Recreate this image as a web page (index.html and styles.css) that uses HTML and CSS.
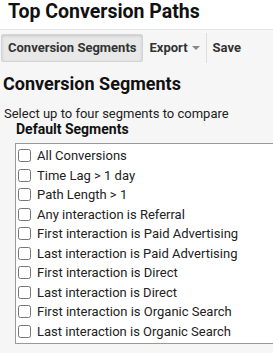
FILE: index.html
```html
<!DOCTYPE html>
<html lang="en">
<head>
    <meta charset="UTF-8">
    <meta name="viewport" content="width=device-width, initial-scale=1.0">
    <title>Top Conversion Paths</title>
    <link rel="stylesheet" href="styles.css">
</head>
<body>
    <header class="page-header">
        <h1>Top Conversion Paths</h1>
    </header>
    <nav class="toolbar">
        <button class="tool-btn active">Conversion Segments</button>
        <button class="tool-btn">Export <span class="caret"></span></button>
        <span class="sep"></span>
        <button class="tool-btn">Save</button>
    </nav>
    <section class="segments">
        <h2>Conversion Segments</h2>
        <p class="hint">Select up to four segments to compare</p>
        <h3>Default Segments</h3>
        <ul class="segment-list">
            <li><label><input type="checkbox"> All Conversions</label></li>
            <li><label><input type="checkbox"> Time Lag &gt; 1 day</label></li>
            <li><label><input type="checkbox"> Path Length &gt; 1</label></li>
            <li><label><input type="checkbox"> Any interaction is Referral</label></li>
            <li><label><input type="checkbox"> First interaction is Paid Advertising</label></li>
            <li><label><input type="checkbox"> Last interaction is Paid Advertising</label></li>
            <li><label><input type="checkbox"> First interaction is Direct</label></li>
            <li><label><input type="checkbox"> Last interaction is Direct</label></li>
            <li><label><input type="checkbox"> First interaction is Organic Search</label></li>
            <li><label><input type="checkbox"> Last interaction is Organic Search</label></li>
        </ul>
    </section>
</body>
</html>
```

FILE: styles.css
```css
html {
  box-sizing: border-box;
  font-family: Roboto, "Liberation Sans", sans-serif;
}
*,
*:before,
*:after {
  box-sizing: inherit;
}
body {
  margin: 0;
  background-color: #f6f6f6;
  color: #222;
  overflow: hidden;
}
.page-header {
  background-color: #fff;
  height: 30px;
  border-bottom: 1px solid #e2e2e2;
  padding: 1px 0 0 8px;
}
h1 {
  margin: 0;
  font-size: 19.5px;
  line-height: 22px;
  color: #111;
}
.toolbar {
  display: flex;
  align-items: center;
  height: 33px;
  padding: 3px 0 1px 1px;
}
.tool-btn {
  font-family: inherit;
  font-size: 13px;
  font-weight: bold;
  color: #333;
  background: none;
  border: none;
  height: 28px;
  padding: 0 6px;
  display: flex;
  align-items: center;
  white-space: nowrap;
}
.tool-btn.active {
  background-color: #e8e8e8;
  border: 1px solid #d4d4d4;
  border-radius: 2px;
  box-shadow: inset 0 1px 3px rgba(0,0,0,.15);
  padding: 0 6px;
}
.caret {
  display: inline-block;
  margin-left: 4px;
  border-left: 4px solid transparent;
  border-right: 4px solid transparent;
  border-top: 4px solid #888;
}
.sep {
  width: 1px;
  height: 30px;
  background-color: #ddd;
}
.segments {
  padding: 0 0 0 3px;
}
h2 {
  margin: 10px 0 0;
  font-size: 18px;
  line-height: 22px;
  color: #111;
}
.hint {
  font-size: 13px;
  line-height: 15px;
  margin: 11px 0 0 1px;
  color: #222;
}
h3 {
  margin: 0 0 0 13px;
  font-size: 14px;
  line-height: 16px;
  color: #111;
}
.segment-list {
  list-style: none;
  margin: 6px 0 0 12px;
  padding: 2px 0 2px 1px;
  width: 280px;
  background-color: #fff;
  border: 1px solid #999;
  border-right: none;
  font-size: 13px;
  color: #222;
}
.segment-list li {
  height: 19.5px;
  display: flex;
  align-items: center;
}
.segment-list label {
  display: flex;
  align-items: center;
}
.segment-list input {
  margin: 0 6px 0 1px;
  width: 13px;
  height: 13px;
}
```
